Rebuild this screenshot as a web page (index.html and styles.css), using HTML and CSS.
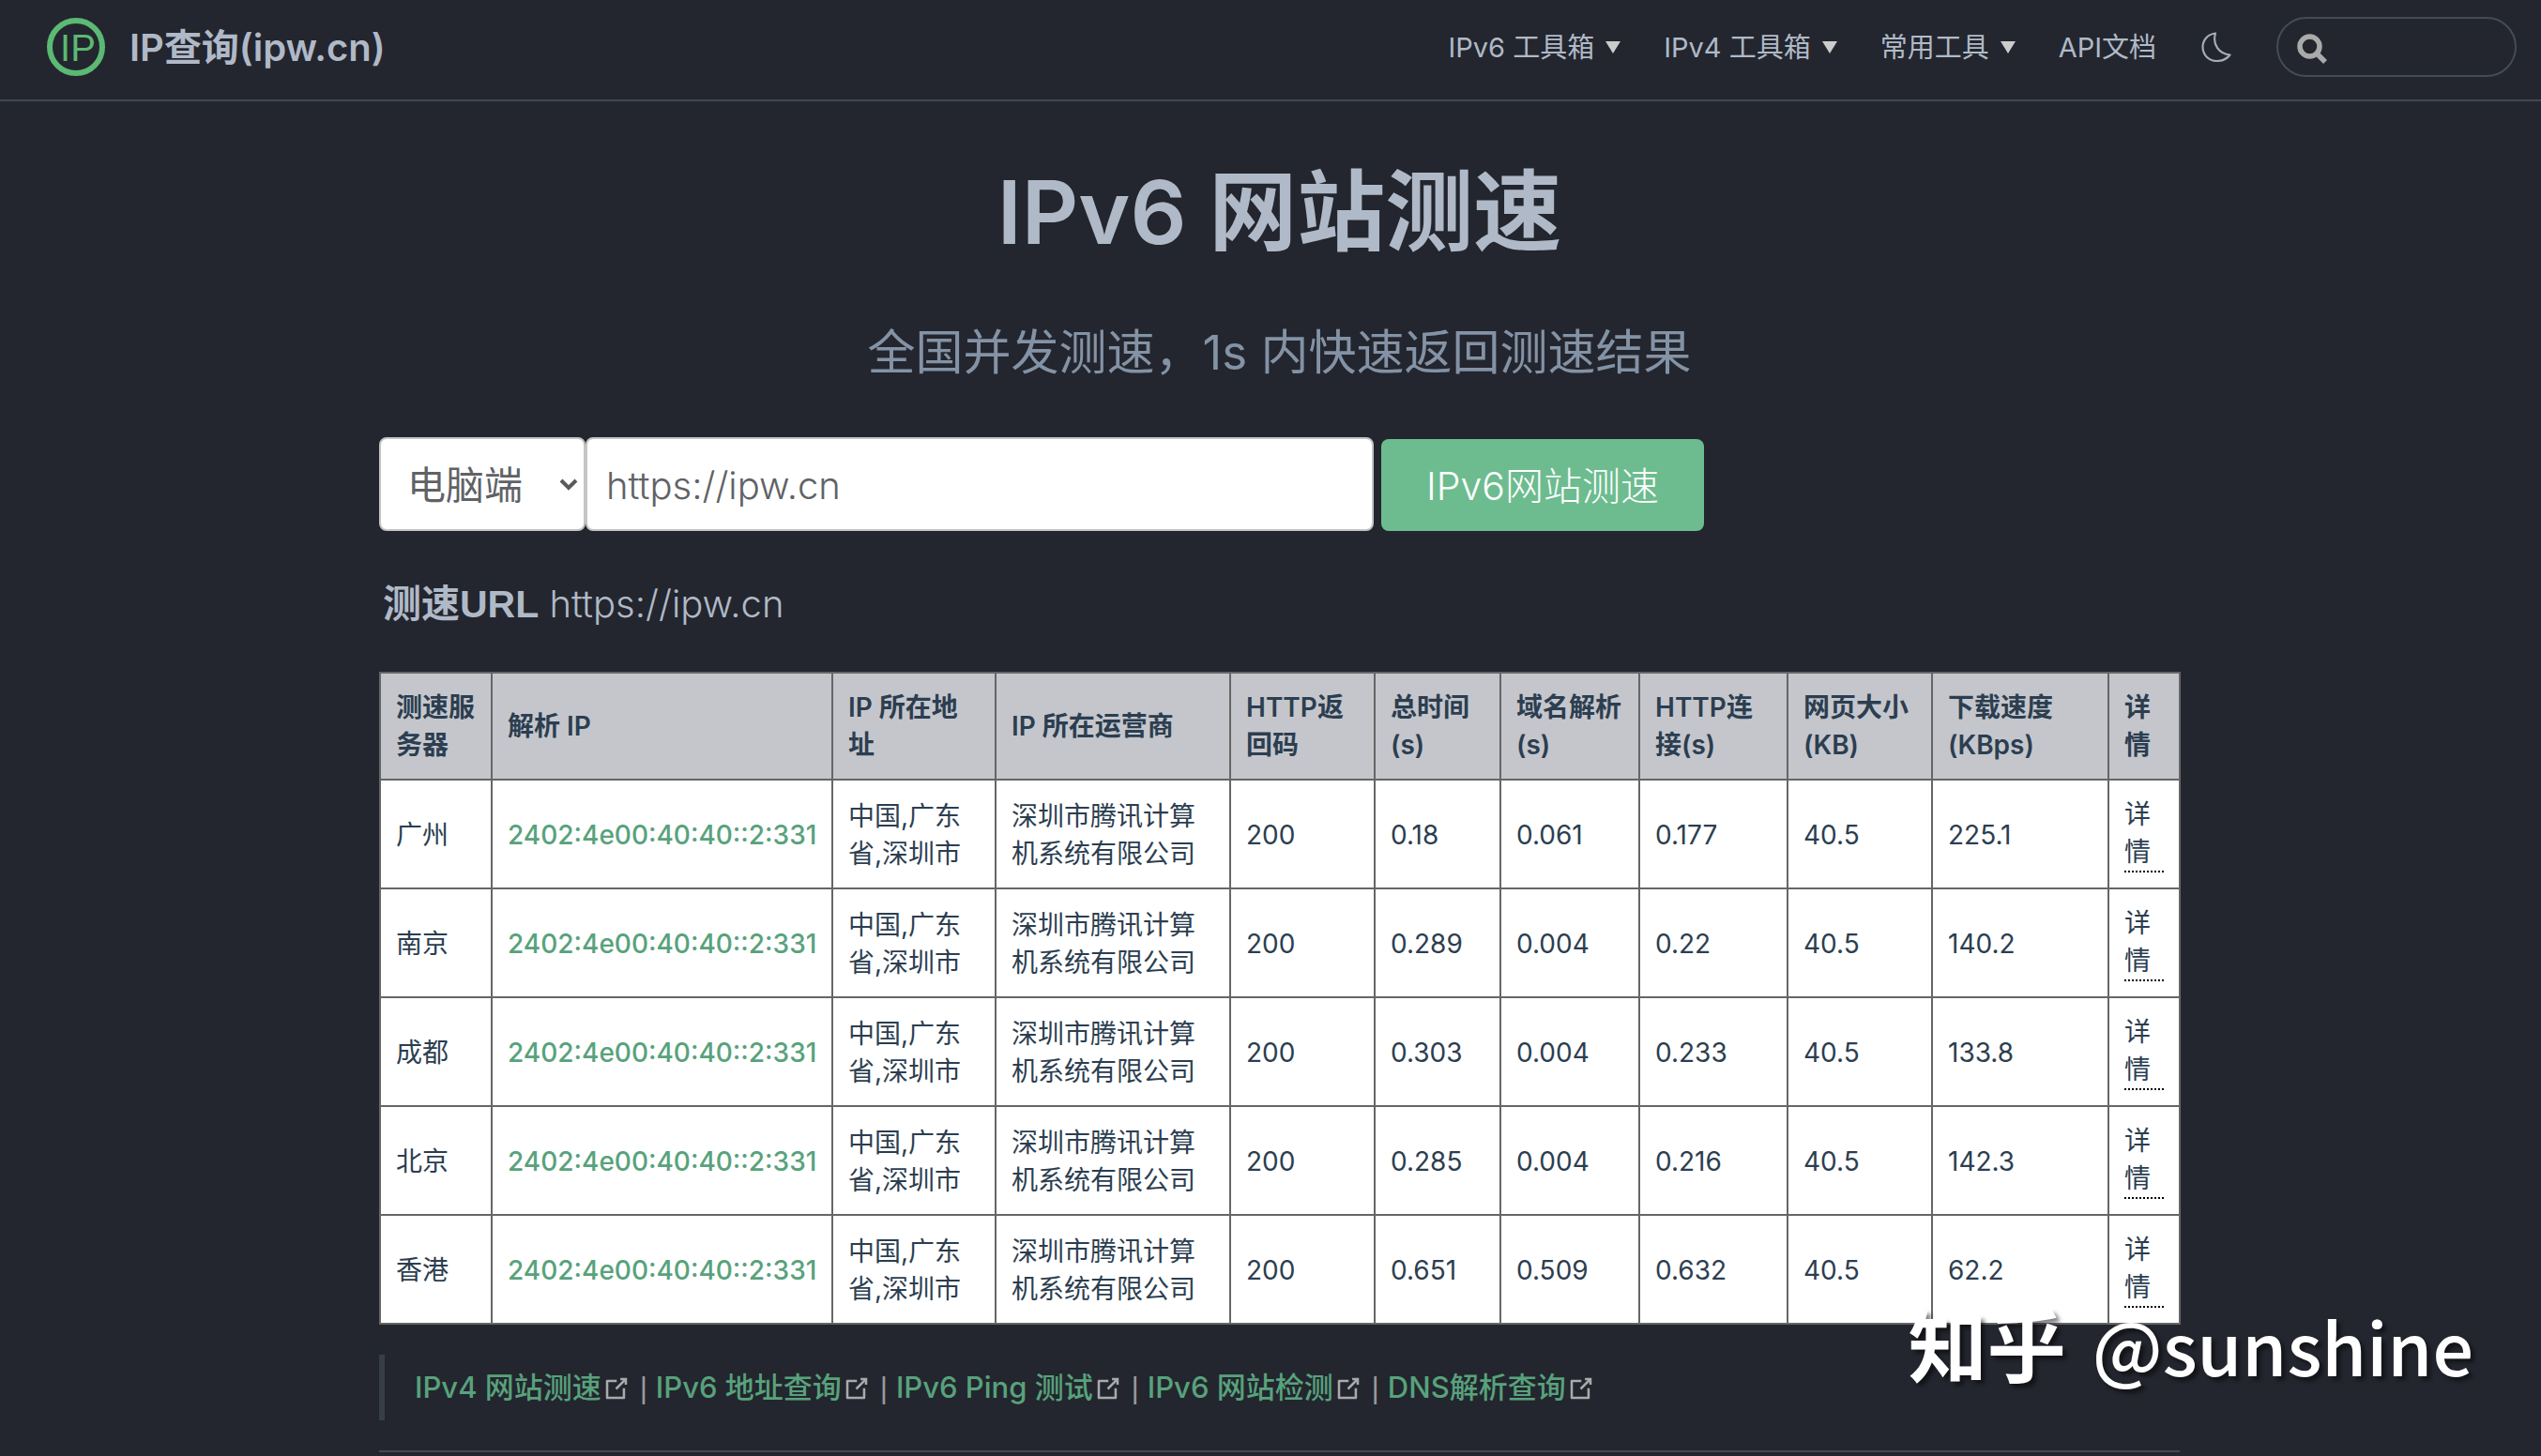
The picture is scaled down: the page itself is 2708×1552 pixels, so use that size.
FILE: index.html
```html
<!DOCTYPE html>
<html lang="zh-CN">
<head>
    <meta charset="UTF-8">
    <meta name="viewport" content="width=device-width, initial-scale=1.0">
    <title>IPv6 网站测速 | IP查询(ipw.cn)</title>
    <link rel="stylesheet" href="styles.css">
</head>
<body>
    <svg class="sprite" aria-hidden="true">
        <symbol id="outbound" viewBox="0 0 100 100">
            <path fill="currentColor" d="M18.8,85.1h56l0,0c2.2,0,4-1.8,4-4v-32h-8v28h-48v-48h28v-8h-32l0,0c-2.2,0-4,1.8-4,4v56C14.8,83.3,16.6,85.1,18.8,85.1z"/>
            <polygon fill="currentColor" points="45.7,48.7 51.3,54.3 77.2,28.5 77.2,37.2 85.2,37.2 85.2,14.9 62.8,14.9 62.8,22.9 71.5,22.9"/>
        </symbol>
    </svg>

    <header class="navbar">
        <a class="brand" href="#">
            <svg class="logo" viewBox="0 0 62 62" aria-hidden="true">
                <circle cx="31" cy="31" r="28" fill="none" stroke="#5bb974" stroke-width="6"/>
                <text x="33" y="46" text-anchor="middle">IP</text>
            </svg>
            <span class="site-name">IP查询(ipw.cn)</span>
        </a>
        <nav class="nav-links">
            <button class="nav-item" type="button">IPv6 工具箱<span class="arrow"></span></button>
            <button class="nav-item" type="button">IPv4 工具箱<span class="arrow"></span></button>
            <button class="nav-item" type="button">常用工具<span class="arrow"></span></button>
            <a class="nav-item" href="#">API文档</a>
        </nav>
        <button class="theme-toggle" type="button" aria-label="切换主题">
            <svg viewBox="0 0 32 32" aria-hidden="true">
                <path d="M15 1.500C6.500 2.500 1.500 9 1.500 16C1.500 24.500 8 31 16.500 31C22.500 31 27.500 28.500 30.500 24.500C19 23.500 11.500 13.500 15 1.500Z" fill="none" stroke="#a4acb8" stroke-width="2.200" stroke-linejoin="round"/>
            </svg>
        </button>
        <div class="search-box">
            <svg viewBox="0 0 32 32" aria-hidden="true">
                <circle cx="13.500" cy="13.500" r="10.500" fill="none" stroke="#aaa" stroke-width="5.500"/>
                <path d="M21 21L30 30" stroke="#aaa" stroke-width="5.500"/>
            </svg>
            <input type="text" aria-label="搜索">
        </div>
    </header>

    <main class="page">
        <div class="hero">
            <h1>IPv6 网站测速</h1>
            <p class="description">全国并发测速，1s 内快速返回测速结果</p>
        </div>

        <form class="test-form">
            <div class="select-wrap">
                <select aria-label="终端类型">
                    <option>电脑端</option>
                    <option>手机端</option>
                </select>
                <svg viewBox="0 0 20 14" aria-hidden="true"><path d="M2 2L10 10L18 2" fill="none" stroke="#5a5a5a" stroke-width="4"/></svg>
            </div>
            <input class="url-input" type="text" value="https://ipw.cn" aria-label="网址">
            <button class="submit-button" type="button">IPv6网站测速</button>
        </form>

        <p class="test-url"><strong>测速URL</strong> https://ipw.cn</p>

        <table>
            <colgroup>
                <col class="c-server"><col class="c-ip"><col class="c-place"><col class="c-isp"><col class="c-code"><col class="c-total">
                <col class="c-dns"><col class="c-connect"><col class="c-size"><col class="c-speed"><col class="c-detail">
            </colgroup>
            <thead>
                <tr>
                    <th>测速服务器</th>
                    <th>解析 IP</th>
                    <th>IP 所在地址</th>
                    <th>IP 所在运营商</th>
                    <th>HTTP返回码</th>
                    <th>总时间<br>(s)</th>
                    <th>域名解析<br>(s)</th>
                    <th>HTTP连接(s)</th>
                    <th>网页大小<br>(KB)</th>
                    <th>下载速度<br>(KBps)</th>
                    <th>详情</th>
                </tr>
            </thead>
            <tbody>
                <tr>
                    <td>广州</td>
                    <td><a href="#">2402:4e00:40:40::2:331</a></td>
                    <td>中国,广东省,深圳市</td>
                    <td>深圳市腾讯计算机系统有限公司</td>
                    <td>200</td>
                    <td>0.18</td>
                    <td>0.061</td>
                    <td>0.177</td>
                    <td>40.5</td>
                    <td>225.1</td>
                    <td class="detail-cell"><span class="detail">详情</span></td>
                </tr>
                <tr>
                    <td>南京</td>
                    <td><a href="#">2402:4e00:40:40::2:331</a></td>
                    <td>中国,广东省,深圳市</td>
                    <td>深圳市腾讯计算机系统有限公司</td>
                    <td>200</td>
                    <td>0.289</td>
                    <td>0.004</td>
                    <td>0.22</td>
                    <td>40.5</td>
                    <td>140.2</td>
                    <td class="detail-cell"><span class="detail">详情</span></td>
                </tr>
                <tr>
                    <td>成都</td>
                    <td><a href="#">2402:4e00:40:40::2:331</a></td>
                    <td>中国,广东省,深圳市</td>
                    <td>深圳市腾讯计算机系统有限公司</td>
                    <td>200</td>
                    <td>0.303</td>
                    <td>0.004</td>
                    <td>0.233</td>
                    <td>40.5</td>
                    <td>133.8</td>
                    <td class="detail-cell"><span class="detail">详情</span></td>
                </tr>
                <tr>
                    <td>北京</td>
                    <td><a href="#">2402:4e00:40:40::2:331</a></td>
                    <td>中国,广东省,深圳市</td>
                    <td>深圳市腾讯计算机系统有限公司</td>
                    <td>200</td>
                    <td>0.285</td>
                    <td>0.004</td>
                    <td>0.216</td>
                    <td>40.5</td>
                    <td>142.3</td>
                    <td class="detail-cell"><span class="detail">详情</span></td>
                </tr>
                <tr>
                    <td>香港</td>
                    <td><a href="#">2402:4e00:40:40::2:331</a></td>
                    <td>中国,广东省,深圳市</td>
                    <td>深圳市腾讯计算机系统有限公司</td>
                    <td>200</td>
                    <td>0.651</td>
                    <td>0.509</td>
                    <td>0.632</td>
                    <td>40.5</td>
                    <td>62.2</td>
                    <td class="detail-cell"><span class="detail">详情</span></td>
                </tr>
            </tbody>
        </table>

        <blockquote class="related">
            <a href="#">IPv4 网站测速<svg><use href="#outbound"/></svg></a> |
            <a href="#">IPv6 地址查询<svg><use href="#outbound"/></svg></a> |
            <a href="#">IPv6 Ping 测试<svg><use href="#outbound"/></svg></a> |
            <a href="#">IPv6 网站检测<svg><use href="#outbound"/></svg></a> |
            <a href="#">DNS解析查询<svg><use href="#outbound"/></svg></a>
        </blockquote>
        <hr>
    </main>

    <div class="watermark"><b>知乎</b><span>@sunshine</span></div>
</body>
</html>
```
FILE: styles.css
```css
/* Global styles */
* {
    box-sizing: border-box;
}

body {
    margin: 0;
    font-family: Inter, "Noto Sans CJK SC", sans-serif;
    font-size: 32px;
    background-color: #23262e;
    color: #adbac7;
}

a {
    color: #58a27c;
    text-decoration: none;
}

button,
input,
select {
    font-family: inherit;
    margin: 0;
}

.sprite {
    display: none;
}

/* Top bar */
.navbar {
    display: flex;
    align-items: center;
    height: 108px;
    padding: 0 26px 6px 50px;
    border-bottom: 2px solid #444951;
}

.brand {
    display: flex;
    align-items: center;
    gap: 26px;
    margin-right: auto;
    color: #b0b9c7;
}

.logo {
    width: 62px;
    height: 62px;
}

.logo text {
    font-family: "Liberation Sans", sans-serif;
    font-size: 40px;
    fill: #5bb974;
}

.site-name {
    padding-bottom: 4px;
    font-size: 40px;
    font-weight: 600;
}

.nav-links {
    display: flex;
    gap: 46px;
    padding-bottom: 4px;
}

.nav-item {
    display: flex;
    align-items: center;
    gap: 12px;
    padding: 0;
    border: none;
    background: none;
    color: #b0b9c7;
    font-size: 29px;
    font-weight: 400;
    cursor: pointer;
}

.arrow {
    margin-top: 4px;
    border-left: 8px solid transparent;
    border-right: 8px solid transparent;
    border-top: 13px solid #ccc;
}

.theme-toggle {
    display: flex;
    margin: 0 48px;
    padding: 0;
    border: none;
    background: none;
    cursor: pointer;
}

.theme-toggle svg,
.search-box svg {
    width: 32px;
    height: 32px;
    flex: none;
}

.search-box {
    display: flex;
    align-items: center;
    width: 256px;
    height: 64px;
    padding: 4px 20px 0;
    border: 2px solid #444c56;
    border-radius: 32px;
}

.search-box input {
    width: 100%;
    border: none;
    outline: none;
    background: none;
    color: #b0b9c7;
    font-size: 29px;
}

/* Content */
.page {
    min-width: 1600px;
    margin: 0 385px 0 404px;
}

.hero {
    text-align: center;
}

h1 {
    margin: 0;
    padding-top: 58px;
    font-size: 94px;
    font-weight: 600;
    line-height: 120px;
    color: #b0b9c7;
}

.description {
    margin: 58px 0;
    font-size: 51px;
    line-height: 64px;
    color: #8492a5;
}

/* Test form */
.test-form {
    display: flex;
    align-items: flex-end;
}

.select-wrap {
    position: relative;
}

.select-wrap svg {
    position: absolute;
    right: 8px;
    top: 44px;
    width: 20px;
    height: 14px;
    pointer-events: none;
}

.select-wrap select,
.url-input {
    display: block;
    height: 100px;
    border: 2px solid #c4c4c4;
    border-radius: 8px;
    background-color: #fff;
    color: #606266;
    font-size: 41px;
    outline: none;
}

.select-wrap select {
    width: 220px;
    padding: 2px 28px 0;
    appearance: none;
}

.url-input {
    width: 840px;
    padding: 2px 20px 0;
    font-size: 40px;
    font-weight: 300;
}

.submit-button {
    width: 344px;
    height: 98px;
    margin-left: 8px;
    padding: 0 0 4px;
    border: none;
    border-radius: 8px;
    background-color: #6dbc8f;
    color: #fff;
    font-size: 41px;
    font-weight: 300;
    cursor: pointer;
}

.test-url {
    margin: 46px 0 40px;
    padding-left: 4px;
    font-size: 40px;
    font-weight: 300;
    line-height: 64px;
    color: #b0b9c7;
}

.test-url strong {
    font-family: "Liberation Sans", "Noto Sans CJK SC", sans-serif;
    font-size: 41px;
    font-weight: 700;
}

/* Result table */
table {
    width: 100%;
    table-layout: fixed;
    border-collapse: collapse;
    background-color: #fff;
    color: #2c3e50;
    font-size: 28px;
    line-height: 40px;
}

th,
td {
    padding: 16px;
    border: 2px solid #666;
    text-align: left;
}

th {
    background-color: #c5c6cc;
    font-weight: 600;
}

td {
    padding: 17px 14px 15px 16px;
}

td a {
    font-weight: 500;
}

.c-server { width: 119px; }
.c-ip { width: 363px; }
.c-place { width: 174px; }
.c-isp { width: 250px; }
.c-code { width: 154px; }
.c-total { width: 134px; }
.c-dns { width: 148px; }
.c-connect { width: 158px; }
.c-size { width: 154px; }
.c-speed { width: 188px; }
.c-detail { width: 76px; }

.detail-cell {
    padding: 16px;
}

.detail {
    display: block;
    border-bottom: 2px dotted #000;
}

/* Related links */
.related {
    margin: 32px 0;
    padding: 8px 0 8px 32px;
    border-left: 6px solid #373e47;
    font-family: "Liberation Sans", sans-serif;
    line-height: 54px;
    color: #999;
}

.related a {
    font-family: Inter, "Noto Sans CJK SC", sans-serif;
    font-size: 31px;
    font-weight: 500;
}

.related svg {
    width: 32px;
    height: 32px;
    color: #aaa;
    vertical-align: -6px;
}

hr {
    margin: 0;
    border: none;
    border-top: 2px solid #444951;
}

/* Corner mark over the page */
.watermark {
    position: fixed;
    right: 72px;
    bottom: 62px;
    display: flex;
    align-items: baseline;
    gap: 28px;
    font-family: "Noto Sans CJK SC", sans-serif;
    font-size: 77px;
    font-weight: 500;
    line-height: 112px;
    color: #fff;
    text-shadow: 4px 4px 4px rgba(0, 0, 0, 0.5);
    pointer-events: none;
}

.watermark b {
    font-size: 84px;
    line-height: 96px;
}
```
